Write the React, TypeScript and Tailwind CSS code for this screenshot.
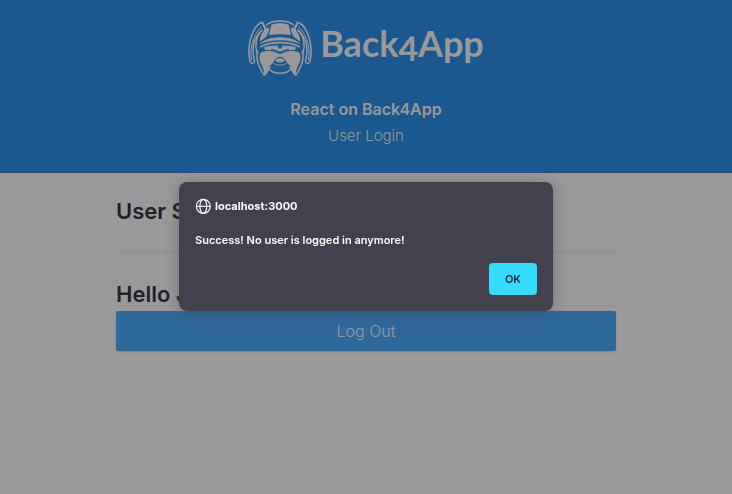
function Mascot() {
  return (
    <svg viewBox="2 7 192 168" className="h-14 w-16 shrink-0 fill-none stroke-current" aria-hidden="true" strokeWidth="4.5" strokeLinecap="round" strokeLinejoin="round">
      <path d="M55 40L45 14C29 19 16 40 9 66C3 92 4 116 9 133C12 139 20 139 21 133C22 127 17 116 17 98C17 75 28 53 43 38" />
      <path d="M141 40L151 14C167 19 180 40 187 66C193 92 192 116 187 133C184 139 176 139 175 133C174 127 179 116 179 98C179 75 168 53 153 38" />
      <path d="M13 128C7 101 12 58 42 27M183 128C189 101 184 58 154 27" strokeWidth="3" />
      <path d="M45 14L58 38M151 14L138 38" />
      <path d="M57 22C76 6 120 6 139 22" />
      <path d="M44 38C25 56 22 83 29 106M152 38C171 56 174 83 167 106" />
      <path className="fill-current stroke-none" d="M72 21Q98 11 124 21L131 53Q98 46 65 53Z" />
      <path className="fill-current stroke-none" d="M53 35L62 29L66 35L59 55L37 72C38 56 44 44 53 35ZM143 35L134 29L130 35L137 55L159 72C158 56 152 44 143 35Z" />
      <path className="fill-current stroke-none" d="M36 80C60 52 136 52 160 80C124 64 72 64 36 80Z" />
      <path d="M40 87C72 71 124 71 156 87" strokeWidth="5" />
      <path className="fill-current stroke-none" d="M50 89Q71 81 92 84L92 91Q97 94 104 91L104 84Q125 81 146 89L143 97L129 98Q119 91 110 98L98 102L86 98Q77 91 67 98L53 97Z" />
      <path className="fill-current stroke-none" d="M40 105C54 97 80 98 98 110C116 98 142 97 156 105C161 116 161 128 155 138C148 151 146 159 145 170C137 164 131 150 126 142C117 137 115 125 108 120Q98 114 88 120C81 125 79 137 70 142C65 150 59 164 51 170C50 159 48 151 41 138C35 128 35 116 40 105Z" />
      <path d="M31 102C25 119 31 143 50 172L55 169L68 149M165 102C171 119 165 143 146 172L141 169L128 149" />
      <path d="M65 154C80 171 116 171 131 154" />
      <ellipse className="fill-current stroke-none" cx="98" cy="128" rx="13" ry="6" />
      <path d="M80 138Q98 148 116 138" strokeWidth="3" />
    </svg>
  );
}

function Globe() {
  return (
    <svg viewBox="0 0 16 16" className="size-4 fill-none stroke-current" strokeWidth="1.2" aria-hidden="true">
      <circle cx="8.3" cy="8.3" r="7" />
      <ellipse cx="8.3" cy="8.3" rx="3.4" ry="7" />
      <path d="M1.3 8.3H15.3" />
    </svg>
  );
}

export default function App() {
  return (
    <div className="min-h-screen bg-[#99999b] font-['Inter',sans-serif] text-[#222225]">
      <header className="flex flex-col items-center bg-[#1b588e] pt-5 pb-[23px] text-[#99999b]">
        <div className="flex h-14 items-start gap-2">
          <Mascot />
          <span className="font-['Lato',sans-serif] text-4xl leading-[46px] font-bold oldstyle-nums">Back4App</span>
        </div>
        <p className="mt-5 text-base leading-[26px] font-semibold">React on Back4App</p>
        <p className="text-[15px] leading-7 font-light">User Login</p>
      </header>
      <main className="mx-auto max-w-[500px] pt-[22px]">
        <h2 className="text-[22px] leading-8 font-semibold">User S</h2>
        <hr className="my-6 border-[#8c8c8e]" />
        <h2 className="pt-0.5 pb-px text-[22px] leading-8 font-semibold">Hello J</h2>
        <button className="h-10 w-full rounded-xs bg-[#2f699b] text-base font-light text-[#99999b] shadow-sm">Log Out</button>
      </main>
      <div role="dialog" aria-modal="true" aria-labelledby="dialog-origin" className="fixed inset-0 flex items-center justify-center pb-px">
        <div className="w-[374px] rounded-lg bg-[#43414d] p-4 text-[11px] leading-4 font-semibold text-[#fbfbfe] shadow-[0_2px_14px_rgb(58_57_68/0.4)]">
          <div id="dialog-origin" className="flex items-center gap-1 font-bold"><Globe />localhost:3000</div>
          <p className="mt-[18px]">Success! No user is logged in anymore!</p>
          <div className="mt-[15px] flex justify-end">
            <button className="h-8 w-12 rounded bg-[#33dcff] font-semibold text-[#2b2a33]">OK</button>
          </div>
        </div>
      </div>
    </div>
  );
}
